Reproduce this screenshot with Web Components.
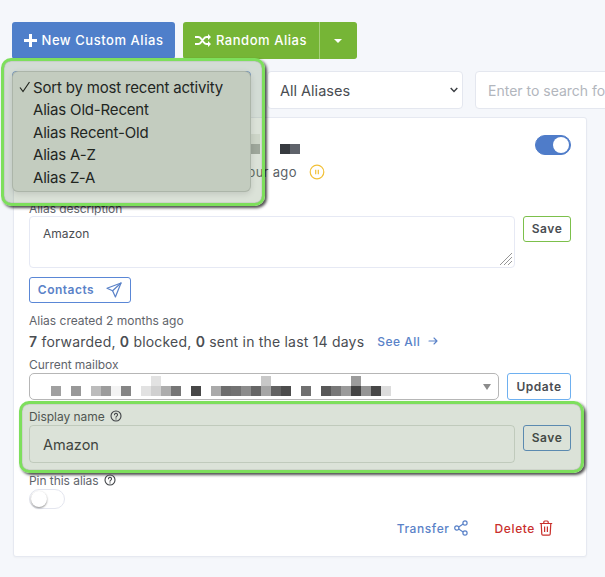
<!DOCTYPE html>
<html>
<head>
<meta charset="utf-8">
<title>Aliases</title>
<style>
  html, body { margin: 0; height: 100%; background: #f5f7fb; }
  body { font-family: Inter, "Liberation Sans", sans-serif; color: #4a4d52; overflow: hidden; }
</style>
</head>
<body>
<alias-page></alias-page>
<script>
/**
 * Solid or outlined button with a slot for its label and icon.
 */
class AppButton extends HTMLElement {
  constructor() {
    super();
    this.attachShadow({ mode: 'open' });
    this.shadowRoot.innerHTML = `
      <style>
        :host {
          display: inline-flex;
          align-items: center;
          justify-content: center;
          gap: var(--gap, 4px);
          box-sizing: border-box;
          height: var(--h, 27px);
          width: var(--w, auto);
          border-radius: var(--r, 3px);
          border: 1px solid var(--line, transparent);
          background: var(--bg, transparent);
          color: var(--fg, #4a4d52);
          font: var(--weight, 600) var(--size, 12px)/1 Inter, "Liberation Sans", sans-serif;
          letter-spacing: var(--track, .55px);
          white-space: nowrap;
        }
      </style>
      <slot></slot>
    `;
  }
}
customElements.define('app-button', AppButton);

/**
 * Field box. Looks like a form control, holds its value in a slot.
 */
class FormField extends HTMLElement {
  constructor() {
    super();
    this.attachShadow({ mode: 'open' });
    this.shadowRoot.innerHTML = `
      <style>
        :host {
          display: flex;
          align-items: var(--align, center);
          position: relative;
          box-sizing: border-box;
          flex: var(--flex, 1 1 auto);
          width: var(--w, auto);
          height: var(--h, 38px);
          padding: var(--pad, 0 13px);
          background: var(--bg, #fff);
          border: 1px solid var(--line, #e4e7ef);
          border-radius: var(--r, 4px);
          font-size: var(--size, 14px);
          color: var(--fg, #4a4d52);
          white-space: nowrap;
          overflow: visible;
        }
      </style>
      <slot></slot>
    `;
  }
}
customElements.define('form-field', FormField);

/**
 * On/off switch. Add the "on" attribute for the active state.
 */
class ToggleSwitch extends HTMLElement {
  constructor() {
    super();
    this.attachShadow({ mode: 'open' });
    this.shadowRoot.innerHTML = `
      <style>
        :host {
          display: flex;
          justify-content: flex-start;
          box-sizing: border-box;
          width: 36px;
          height: 20px;
          padding: 1px;
          border-radius: 10px;
          background: #fff;
          border: 1px solid #e4e6ef;
        }
        :host([on]) {
          justify-content: flex-end;
          background: #4f7cc9;
          border-color: #4f7cc9;
        }
        .knob {
          width: 16px;
          height: 16px;
          border-radius: 50%;
          background: #fff;
          box-shadow: 0 1px 2px rgba(0, 0, 0, .45);
        }
        :host([on]) .knob { box-shadow: none; }
      </style>
      <div class="knob"></div>
    `;
  }
}
customElements.define('toggle-switch', ToggleSwitch);

/**
 * Question mark in a circle, shown after form labels.
 */
class HelpIcon extends HTMLElement {
  constructor() {
    super();
    this.attachShadow({ mode: 'open' });
    this.shadowRoot.innerHTML = `
      <style>
        :host { display: inline-flex; margin-left: 5px; }
      </style>
      <svg width="12" height="12" viewBox="0 0 12 12" fill="none" stroke="#3f4246" stroke-width="1.1" stroke-linecap="round">
        <circle cx="6" cy="6" r="5"/>
        <path d="M4.5 4.8a1.5 1.5 0 1 1 2.3 1.3c-.5.3-.8.6-.8 1.1"/>
        <path d="M6 8.8v.1"/>
      </svg>
    `;
  }
}
customElements.define('help-icon', HelpIcon);

/**
 * Blurred out (pixelated) text, from a list of [column, row, colour] blocks.
 */
class PixelBlocks extends HTMLElement {
  constructor() {
    super();
    this.attachShadow({ mode: 'open' });
    this.shadowRoot.innerHTML = `
      <style>
        :host {
          display: grid;
          grid-auto-columns: 10px;
          grid-template-rows: 10px 10px;
        }
      </style>
    `;
  }

  connectedCallback() {
    const blocks = JSON.parse(this.getAttribute('blocks'));
    blocks.forEach(([col, row, colour]) => {
      const block = document.createElement('div');
      block.style.gridColumn = col + 1;
      block.style.gridRow = row + 1;
      block.style.background = colour;
      this.shadowRoot.appendChild(block);
    });
  }
}
customElements.define('pixel-blocks', PixelBlocks);

/**
 * Green annotation frame drawn round a part of the page.
 */
class HighlightBox extends HTMLElement {
  constructor() {
    super();
    this.attachShadow({ mode: 'open' });
    this.shadowRoot.innerHTML = `
      <style>
        :host {
          display: block;
          box-sizing: border-box;
          border: 3px solid #7ddf5c;
          border-radius: 10px;
          background: rgba(110, 140, 100, .25);
          box-shadow: 2px 2px 3px rgba(0, 0, 0, .7), inset 0 0 1px rgba(0, 0, 0, .6);
        }
      </style>
      <slot></slot>
    `;
  }
}
customElements.define('highlight-box', HighlightBox);

/**
 * Open sort menu, with its annotation frame, lying over the page.
 */
class SortMenu extends HTMLElement {
  constructor() {
    super();
    this.attachShadow({ mode: 'open' });
    this.shadowRoot.innerHTML = `
      <style>
        :host {
          position: absolute;
          left: 1px;
          top: 58px;
          width: 264px;
          height: 148px;
          z-index: 5;
        }
        highlight-box { height: 100%; padding: 10px 12px 0 8px; }
        .menu {
          box-sizing: border-box;
          width: 239px;
          height: 121px;
          padding: 4px 0 0 6px;
          background: #c3ccbf;
          border: 1px solid rgba(90, 100, 90, .22);
          border-radius: 6px;
          box-shadow: 0 2px 6px rgba(0, 0, 0, .12);
          font-size: 15px;
          letter-spacing: -.18px;
          color: #22261f;
        }
        .item {
          display: flex;
          align-items: center;
          height: 22.5px;
          white-space: nowrap;
        }
        .mark { width: 14px; flex: none; }
        svg { display: block; }
      </style>
      <highlight-box>
        <div class="menu">
          <div class="item">
            <span class="mark">
              <svg width="12" height="12" viewBox="0 0 12 12" fill="none" stroke="#22261f" stroke-width="1.2"><path d="M1 6.5 4 10.5 10.5 1"/></svg>
            </span>Sort by most recent activity
          </div>
          <div class="item"><span class="mark"></span>Alias Old-Recent</div>
          <div class="item"><span class="mark"></span>Alias Recent-Old</div>
          <div class="item"><span class="mark"></span>Alias A-Z</div>
          <div class="item"><span class="mark"></span>Alias Z-A</div>
        </div>
      </highlight-box>
    `;
  }
}
customElements.define('sort-menu', SortMenu);

/**
 * Card with the settings of one alias.
 */
class AliasCard extends HTMLElement {
  constructor() {
    super();
    this.attachShadow({ mode: 'open' });
    this.shadowRoot.innerHTML = `
      <style>
        :host {
          display: block;
          box-sizing: border-box;
          width: 574px;
          height: 440px;
          margin-top: 8px;
          padding: 16px 15px 18px;
          background: #fff;
          border: 1px solid #e6e9f1;
          border-radius: 3px;
          box-shadow: 0 1px 2px rgba(0, 0, 0, .03);
        }
        .head { display: flex; justify-content: space-between; height: 20px; }
        .head pixel-blocks { margin: 0 0 0 221px; }
        .activity {
          display: flex;
          align-items: center;
          height: 16px;
          margin-top: 10px;
          padding-left: 201px;
          font-size: 13px;
          color: #5a5f66;
          letter-spacing: .3px;
        }
        .activity svg { margin-left: 12px; }
        .label {
          display: flex;
          align-items: center;
          height: 16px;
          font-size: 12px;
          letter-spacing: -.05px;
          color: #5f646b;
        }
        .row { display: flex; gap: 8px; align-items: flex-start; }
        .desc { margin-top: 20px; }
        .grip { position: absolute; right: 1px; bottom: 1px; }
        .save { --w: 48px; }
        .save-ok { --line: #7cc04b; --h: 26px; }
        .save-focus { --line: #5b8ab0; --fg: #444a46; --h: 26px; }
        .contacts {
          --w: 102px; --h: 26px; --line: #5a87d6; --fg: #5a82c8; --gap: 12px; --size: 12px; --track: .5px;
          margin-top: 9px;
          display: flex;
        }
        .created { margin-top: 9px; font-size: 12px; letter-spacing: 0; }
        .counts {
          display: flex;
          align-items: center;
          height: 20px;
          margin-top: 3px;
          font-size: 14px;
          letter-spacing: .2px;
          color: #4a4d52;
        }
        .counts b { font-weight: 600; }
        .see-all {
          display: inline-flex;
          align-items: center;
          gap: 8px;
          margin-left: 13px;
          color: #5a82c8;
          font-size: 12px;
          font-weight: 500;
          letter-spacing: .5px;
        }
        .mailbox-label { margin-top: 5px; }
        .mailbox { margin-top: 1px; }
        .mailbox form-field { --h: 27px; --line: #b6b6b6; --w: 470px; --flex: none; --r: 5px; --pad: 0; }
        .mailbox pixel-blocks { position: absolute; left: 21px; top: 2px; }
        .mailbox .caret { position: absolute; right: 7px; top: 10px; }
        .update { --w: 64px; --h: 27px; --line: #6eb0f0; }
        highlight-box { margin: 1px -13px 0 -10px; height: 72px; padding: 4px 10px 0 7px; }
        highlight-box .row { margin-top: 1px; }
        highlight-box form-field { --bg: rgba(255, 255, 255, 0); --line: rgba(110, 130, 105, .25); --size: 14.5px; --fg: #3f4540; }
        highlight-box .label { color: #4f5651; }
        .pin { margin-top: -1px; }
        toggle-switch { margin-top: 1px; }
        .actions {
          display: flex;
          justify-content: flex-end;
          align-items: center;
          height: 20px;
          margin-top: 9px;
          padding-right: 18px;
          font-size: 12px;
          font-weight: 500;
          letter-spacing: .6px;
        }
        .actions span { display: inline-flex; align-items: center; gap: 4px; }
        .actions .transfer { color: #5a82c8; margin-right: 27px; }
        .actions .delete { color: #c9302c; }
      </style>

      <div class="head">
        <pixel-blocks blocks='[[0,0,"#eceeea"],[0,1,"#aeb0ae"],[3,1,"#363a3f"],[4,1,"#5f636b"]]'></pixel-blocks>
        <toggle-switch on></toggle-switch>
      </div>
      <div class="activity">1 hour ago
        <svg width="16" height="16" viewBox="0 0 16 16" fill="none" stroke="#f2c037" stroke-width="1.2">
          <circle cx="8" cy="8" r="6.8"/>
          <path d="M6.7 5.8v4.4M9.3 5.8v4.4"/>
        </svg>
      </div>

      <div class="label desc">Alias description</div>
      <div class="row">
        <form-field style="--h:52px;--align:flex-start;--pad:9px 13px;--size:12px;--w:486px;--flex:none;--line:#e6e9f4">
          Amazon
          <svg class="grip" width="14" height="14" viewBox="0 0 14 14" stroke="#8a8a8a" stroke-width=".9">
            <path d="M1 13 13 1M5 13l8-8M9 13l4-4"/>
          </svg>
        </form-field>
        <app-button class="save save-ok">Save</app-button>
      </div>

      <app-button class="contacts">Contacts
        <svg width="16" height="16" viewBox="0 0 16 16" fill="none" stroke="#5a82c8" stroke-width="1.2" stroke-linejoin="round" stroke-linecap="round">
          <path d="M15 1 1 6.2l5.6 2.6L9.4 15 15 1Z"/>
          <path d="M15 1 6.6 8.8"/>
        </svg>
      </app-button>

      <div class="label created">Alias created 2 months ago</div>
      <div class="counts">
        <span><b>7</b> forwarded, <b>0</b> blocked, <b>0</b> sent in the last 14 days</span>
        <span class="see-all">See All
          <svg width="10" height="10" viewBox="0 0 10 10" fill="none" stroke="#5a82c8" stroke-width="1.1" stroke-linecap="round" stroke-linejoin="round">
            <path d="M1 5h8M6 2l3 3-3 3"/>
          </svg>
        </span>
      </div>

      <div class="label mailbox-label">Current mailbox</div>
      <div class="row mailbox">
        <form-field>
          <pixel-blocks blocks='[[0,1,"#a0a0a0"],[2,1,"#989898"],[4,1,"#bcbcbc"],[5,1,"#9c9c9c"],[6,1,"#f3f3f3"],[7,1,"#858585"],[9,1,"#e2e2e2"],[10,0,"#e2e2e2"],[10,1,"#d0d0d0"],[11,1,"#adadad"],[12,1,"#767676"],[14,1,"#474747"],[16,1,"#aaaaaa"],[17,1,"#6d6d6d"],[18,1,"#727272"],[19,1,"#8c8c8c"],[20,1,"#666666"],[21,0,"#c8c8c8"],[21,1,"#a5a5a5"],[22,1,"#626262"],[23,1,"#4c4c4c"],[25,1,"#707070"],[27,1,"#585858"],[28,1,"#787878"],[29,1,"#9a9a9a"],[30,0,"#9c9c9c"],[30,1,"#444444"],[31,1,"#949494"],[32,1,"#474747"],[33,1,"#dcdcdc"]]'></pixel-blocks>
          <svg class="caret" width="8" height="6" viewBox="0 0 8 6"><path d="M0 0h8L4 6Z" fill="#8c8c8c"/></svg>
        </form-field>
        <app-button class="update">Update</app-button>
      </div>

      <highlight-box>
        <div class="label">Display name <help-icon></help-icon></div>
        <div class="row">
          <form-field style="--w:486px;--flex:none">Amazon</form-field>
          <app-button class="save save-focus">Save</app-button>
        </div>
      </highlight-box>

      <div class="label pin">Pin this alias <help-icon></help-icon></div>
      <toggle-switch></toggle-switch>

      <div class="actions">
        <span class="transfer">Transfer
          <svg width="14" height="16" viewBox="0 0 14 16" fill="none" stroke="#5a82c8" stroke-width="1.2">
            <circle cx="2.8" cy="8" r="2.1"/><circle cx="11" cy="3" r="2.1"/><circle cx="11" cy="13" r="2.1"/>
            <path d="M4.7 6.9 9.1 4.1M4.7 9.1l4.4 2.8"/>
          </svg>
        </span>
        <span class="delete">Delete
          <svg width="14" height="16" viewBox="0 0 14 16" fill="none" stroke="#c9302c" stroke-width="1.2" stroke-linejoin="round">
            <path d="M.8 3.5h12.4M2.2 3.5l.6 10.6c0 .7.5 1.1 1.1 1.1h6.2c.6 0 1.1-.4 1.1-1.1l.6-10.6M4.8 3.5V2c0-.6.4-1 1-1h2.4c.6 0 1 .4 1 1v1.5M5.6 6.5v5.6M8.4 6.5v5.6"/>
          </svg>
        </span>
      </div>
    `;
  }
}
customElements.define('alias-card', AliasCard);

/**
 * The whole page: toolbar, filters and alias card.
 */
class AliasPage extends HTMLElement {
  constructor() {
    super();
    this.attachShadow({ mode: 'open' });
    this.shadowRoot.innerHTML = `
      <style>
        :host {
          display: block;
          position: relative;
          box-sizing: border-box;
          width: 605px;
          height: 577px;
          padding: 22px 0 0 13px;
          overflow: hidden;
        }
        .toolbar { display: flex; margin-left: -1px; height: 37px; }
        .toolbar app-button { --h: 37px; --fg: #fff; --weight: 500; --size: 13px; --track: .55px; --gap: 5px; }
        .new { --w: 163px; --bg: #4f7fca; margin-right: 8px; }
        .random { --w: 136px; --bg: #76b536; --r: 3px 0 0 3px; }
        .more { --w: 38px; --bg: #76b536; --r: 0 3px 3px 0; --line: #76b536; border-left-color: #a5d077; }
        .filters { display: flex; margin: 12px 0 0 -1px; height: 38px; }
        .sort { --w: 239px; --flex: none; --line: #5a87d6; margin-right: 16px; }
        .all { --w: 196px; --flex: none; --pad: 0 12px; --size: 14.5px; margin-right: 12px; }
        .search { --w: 300px; --flex: none; --fg: #b2b6bd; --pad: 0 12px; }
        .chevron { position: absolute; right: 4px; top: 15px; }
        svg { display: block; }
      </style>
      <div class="toolbar">
        <app-button class="new">
          <svg width="13" height="13" viewBox="0 0 13 13"><path d="M5 0h3v5h5v3H8v5H5V8H0V5h5Z" fill="#fff"/></svg>
          New Custom Alias
        </app-button>
        <app-button class="random">
          <svg width="16" height="13" viewBox="0 0 16 13" fill="none" stroke="#fff" stroke-width="2">
            <path d="M0 3h3.2c1.2 0 2 .5 2.7 1.5l3 4c.7 1 1.5 1.5 2.7 1.5H14M0 10h3.2c1.2 0 2-.5 2.7-1.5l3-4C9.600 3.500 10.400 3 11.600 3H14"/>
            <path d="M13 0l3 3-3 3ZM13 7l3 3-3 3Z" fill="#fff" stroke="none"/>
          </svg>
          Random Alias
        </app-button>
        <app-button class="more">
          <svg width="8" height="4" viewBox="0 0 8 4"><path d="M0 0h8L4 4Z" fill="#fff"/></svg>
        </app-button>
      </div>
      <div class="filters">
        <form-field class="sort"></form-field>
        <form-field class="all">All Aliases
          <svg class="chevron" width="8" height="6" viewBox="0 0 8 6" fill="none" stroke="#3a3d42" stroke-width="1.400"><path d="M.7 1 4 4.500 7.300 1"/></svg>
        </form-field>
        <form-field class="search">Enter to search for an alias</form-field>
      </div>
      <alias-card></alias-card>
      <sort-menu></sort-menu>
    `;
  }
}
customElements.define('alias-page', AliasPage);
</script>
</body>
</html>
